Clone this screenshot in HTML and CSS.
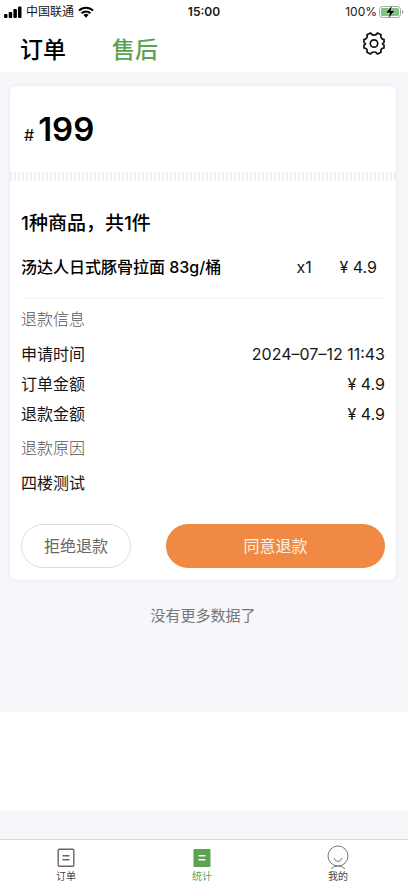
FILE: index.html
```html
<!DOCTYPE html>
<html lang="zh-CN">
<head>
<meta charset="utf-8">
<meta name="viewport" content="width=device-width, initial-scale=1">
<title>售后</title>
<link rel="stylesheet" href="styles.css">
</head>
<body>
<div class="status">
  <div class="carrier">
    <svg width="18" height="12" viewBox="0 0 18 12" aria-hidden="true"><rect x="0" y="8" width="3.500" height="4" rx="1"/><rect x="4.700" y="6" width="3.500" height="6" rx="1"/><rect x="9.400" y="3" width="3.500" height="9" rx="1"/><rect x="14" y="0.500" width="3.500" height="11.500" rx="1"/></svg>
    <span>中国联通</span>
    <svg width="16" height="12" viewBox="0 0 16 12" aria-hidden="true"><path d="M1 4.600a10 10 0 0 1 14 0M3.600 7.300a6.200 6.200 0 0 1 8.800 0" fill="none" stroke="#000" stroke-width="2"/><path d="M5.500 9a3.600 3.600 0 0 1 5 0L8 11.700z"/></svg>
  </div>
  <div class="clock">15:00</div>
  <div class="power">
    <span>100%</span>
    <svg width="25" height="14" viewBox="0 0 25 14" aria-hidden="true"><rect x=".5" y="1.500" width="21" height="11" rx="3" fill="#fff" stroke="#a5aaa5"/><rect x="2" y="3" width="18" height="8" rx="1.500" fill="#79c67c"/><path d="M23 5v4q1.500-.6 1.500-2T23 5z" fill="#a5aaa5"/><path d="M13.500 0 6.500 8h4L9 14l7-8.500h-4z" stroke="#fff" stroke-width=".5"/></svg>
  </div>
</div>
<header class="header">
  <nav class="views">
    <a href="#orders">订单</a>
    <a href="#aftersale" class="current">售后</a>
  </nav>
  <button class="settings" aria-label="设置">
    <svg width="24" height="24" viewBox="0 0 24 24" fill="none" stroke="#111" stroke-width="1.700" stroke-linejoin="round" aria-hidden="true"><path d="M8.500 1C9.500 2.900 10.500 3.200 12 3.200S14.500 2.900 15.500 1L19 2.700C18.500 4.700 18.800 5.500 19.600 6.300S21 7.500 22 7.300V10.500Q20.500 11 20.500 11.800T22 13V16C20.800 16 20.200 16.200 19.600 16.900S18.500 18.500 19 20.300L15.500 22C14.500 20.300 13.500 20 12 20S9.500 20.300 8.500 22L5 20.300C5.500 18.500 5.200 17.700 4.400 16.900S3 16 2 16V13Q3.500 12.500 3.500 11.800T2 10.500V7.300C3 7.500 3.600 7.100 4.400 6.300S5.500 4.700 5 2.700Z"/><circle cx="12" cy="11.500" r="3.700"/></svg>
  </button>
</header>
<main class="content">
  <article class="card">
    <div class="number"><span class="hash">#</span><strong>199</strong></div>
    <div class="perforation"></div>
    <div class="details">
      <h2>1种商品，共1件</h2>
      <div class="product"><strong>汤达人日式豚骨拉面 83g/桶</strong><span>x1</span><span>¥ 4.9</span></div>
      <h3>退款信息</h3>
      <dl class="facts">
        <div><dt>申请时间</dt><dd>2024–07–12 11:43</dd></div>
        <div><dt>订单金额</dt><dd>¥ 4.9</dd></div>
        <div><dt>退款金额</dt><dd>¥ 4.9</dd></div>
      </dl>
      <h3>退款原因</h3>
      <p class="reason">四楼测试</p>
      <div class="actions">
        <button class="reject">拒绝退款</button>
        <button class="approve">同意退款</button>
      </div>
    </div>
  </article>
  <p class="end">没有更多数据了</p>
</main>
<div class="blank"></div>
<nav class="tabs">
  <a href="#orders">
    <svg width="22" height="24" viewBox="0 0 22 24" fill="none" stroke="#666" aria-hidden="true"><rect x="3.200" y="4.200" width="15.600" height="17" rx="1" stroke-width="1.400"/><path d="M7.500 10.800h7M7.500 14.800h7" stroke-width="1.400"/></svg>
    <span>订单</span>
  </a>
  <a href="#stats" class="current">
    <svg width="22" height="24" viewBox="0 0 22 24" aria-hidden="true"><rect x="2.500" y="4" width="17" height="18" rx="1" fill="#5da152"/><path d="M7.500 10.800h7M7.500 14.800h7" stroke="#fff" stroke-width="1.400"/></svg>
    <span>统计</span>
  </a>
  <a href="#mine">
    <svg width="22" height="24" viewBox="0 0 22 24" fill="none" stroke="#777" aria-hidden="true"><circle cx="11" cy="11" r="10"/><path d="M7 13q1 3.500 4 3.500t4-3.500M4 23.700q3-2.700 7-2.700t7 2.700"/></svg>
    <span>我的</span>
  </a>
</nav>
</body>
</html>
```
FILE: styles.css
```css
* {
  box-sizing: border-box;
}

body {
  margin: 0;
  min-height: 100vh;
  display: flex;
  flex-direction: column;
  background: #fff;
  color: #161616;
  font: 16px/24px Inter, "Noto Sans CJK SC", sans-serif;
}

h2, h3, p, dl, dd {
  margin: 0;
}

a {
  color: inherit;
  text-decoration: none;
}

button {
  font: inherit;
  padding: 0;
  cursor: pointer;
}

svg {
  display: block;
}

.status {
  display: grid;
  grid-template-columns: 1fr auto 1fr;
  align-items: center;
  height: 24px;
  padding: 0 4px;
  font-size: 12px;
  line-height: 20px;
}

.carrier, .power {
  display: flex;
  align-items: center;
  gap: 4px;
}

.power {
  justify-content: flex-end;
  gap: 2px;
}

.clock {
  font-weight: 600;
}

.header {
  display: flex;
  justify-content: space-between;
  align-items: flex-start;
  padding: 8px 22px 4px 20px;
}

.views {
  display: flex;
  gap: 46px;
  font-size: 23px;
  line-height: 36px;
  font-weight: 500;
  color: #000;
}

.views .current {
  color: #5da152;
}

.settings {
  height: 24px;
  border: 0;
  background: none;
}

.content {
  padding: 14px 12px 84px 10px;
  background: #f6f6fb;
}

.card {
  background: #fff;
  border-radius: 6px;
  box-shadow: 0 0 3px 1px #ececf1;
}

.number {
  display: flex;
  align-items: baseline;
  gap: 4px;
  padding: 20px 14px 14px;
  line-height: 46px;
  color: #000;
}

.number strong {
  font-size: 33px;
  font-weight: 600;
}

.perforation {
  height: 9px;
  background: repeating-linear-gradient(90deg, #f0f0f0 0 2px, #fff 2px 4px);
}

.details {
  padding: 29px 11px 12px;
}

h2 {
  font-size: 19px;
  line-height: 28px;
  font-weight: 500;
  color: #000;
}

.product {
  display: grid;
  grid-template-columns: 1fr 43px auto;
  padding: 17px 8px 19px 0;
  margin-bottom: 8px;
  border-bottom: 1px solid #f5f5f5;
}

.product strong {
  font-weight: 500;
  color: #000;
}

h3 {
  font-size: 16px;
  line-height: 24px;
  font-weight: 300;
  color: #555;
}

.facts {
  padding: 8px 0 7px;
}

.facts div {
  display: flex;
  justify-content: space-between;
  line-height: 30px;
}

.reason {
  padding: 11px 0 29px;
}

.actions {
  display: grid;
  grid-template-columns: 110px 1fr;
  gap: 35px;
}

.actions button {
  height: 44px;
  border-radius: 22px;
}

.reject {
  border: 1px solid #ddd;
  background: #fff;
  color: #666;
}

.approve {
  border: 0;
  background: #ef8944;
  color: #fff2e4;
}

.end {
  padding-top: 24px;
  text-align: center;
  font-size: 15px;
  color: #777;
}

.blank {
  height: 99px;
}

.tabs {
  flex: 1;
  display: grid;
  grid-template-columns: repeat(3, 1fr);
  gap: 4px;
  padding: 5px 4px 0 0;
  margin-top: 28px;
  border-top: 1px solid #d8d8dc;
  box-shadow: 0 -28px #f6f6fb;
  font-size: 10px;
  line-height: 14px;
  color: #444;
}

.tabs a {
  display: flex;
  flex-direction: column;
  align-items: center;
}

.tabs .current {
  color: #5da152;
}
```
